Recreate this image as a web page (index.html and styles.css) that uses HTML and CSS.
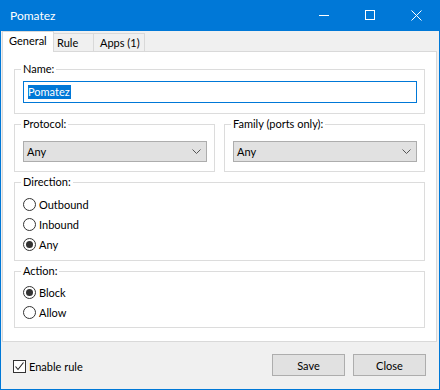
FILE: index.html
```html
<!DOCTYPE html>
<html>
<head>
<meta charset="utf-8">
<link rel="stylesheet" href="styles.css">
</head>
<body>
<div class="window">
  <div class="titlebar">
    <span class="title">Pomatez</span>
    <div class="controls">
      <div class="ctl"><svg width="10" height="10" viewBox="0 0 10 10"><path d="M0 5.5H10" stroke="#fff" stroke-width="1"/></svg></div>
      <div class="ctl"><svg width="10" height="10" viewBox="0 0 10 10"><rect x="0.5" y="0.5" width="9" height="9" fill="none" stroke="#fff" stroke-width="1"/></svg></div>
      <div class="ctl"><svg width="11" height="11" viewBox="0 0 11 11"><path d="M0.5 0.5L10.5 10.5M10.5 0.5L0.5 10.5" stroke="#fff" stroke-width="1"/></svg></div>
    </div>
  </div>
  <div class="main">
    <div class="tabs">
      <div class="tab active tab-general">General</div>
      <div class="tab tab-rule">Rule</div>
      <div class="tab tab-apps">Apps (1)</div>
    </div>
    <div class="panel">
      <fieldset class="group name-group">
        <legend>Name:</legend>
        <div class="textbox"><span class="sel">Pomatez</span></div>
      </fieldset>
      <div class="row">
        <fieldset class="group combo-group">
          <legend>Protocol:</legend>
          <div class="combo"><span>Any</span><svg width="9" height="5" viewBox="0 0 9 5"><path d="M0.5 0.5L4.5 4.5L8.5 0.5" fill="none" stroke="#555" stroke-width="1"/></svg></div>
        </fieldset>
        <fieldset class="group combo-group">
          <legend>Family (ports only):</legend>
          <div class="combo"><span>Any</span><svg width="9" height="5" viewBox="0 0 9 5"><path d="M0.5 0.5L4.5 4.5L8.5 0.5" fill="none" stroke="#555" stroke-width="1"/></svg></div>
        </fieldset>
      </div>
      <fieldset class="group radio-group dir-group">
        <legend>Direction:</legend>
        <div class="radio"><span class="circle"></span><span>Outbound</span></div>
        <div class="radio"><span class="circle"></span><span>Inbound</span></div>
        <div class="radio"><span class="circle checked"></span><span>Any</span></div>
      </fieldset>
      <fieldset class="group radio-group act-group">
        <legend>Action:</legend>
        <div class="radio"><span class="circle checked"></span><span>Block</span></div>
        <div class="radio"><span class="circle"></span><span>Allow</span></div>
      </fieldset>
    </div>
    <div class="footer">
      <div class="check">
        <span class="box"><svg width="11" height="11" viewBox="0 0 11 11"><path d="M1.5 5.5L4 8.5L9.5 1.5" fill="none" stroke="#222" stroke-width="1.1"/></svg></span>
        <span>Enable rule</span>
      </div>
      <div class="buttons">
        <div class="btn">Save</div>
        <div class="btn">Close</div>
      </div>
    </div>
  </div>
</div>
</body>
</html>
```

FILE: styles.css
```css
* { box-sizing: border-box; }
html, body { margin: 0; padding: 0; }
body {
  font-family: Lato, "Noto Sans", sans-serif;
  font-size: 11px;
  color: #000;
  background: #fff;
}
.window {
  width: 440px;
  height: 390px;
  display: flex;
  flex-direction: column;
}
.titlebar {
  height: 31px;
  background: #0078d7;
  display: flex;
  align-items: flex-start;
  justify-content: space-between;
  color: #fff;
}
.title {
  line-height: 31px;
  padding-left: 10px;
  font-size: 12px;
}
.controls {
  display: flex;
  margin-right: 1px;
}
.ctl {
  width: 46px;
  height: 30px;
  display: flex;
  align-items: center;
  justify-content: center;
}
.main {
  flex: 1;
  display: flex;
  flex-direction: column;
  background: #f0f0f0;
  border: 1px solid #0078d7;
  border-top: 0;
}
.tabs {
  height: 20px;
  display: flex;
  align-items: flex-end;
  padding-left: 1px;
}
.tab {
  height: 18px;
  line-height: 17px;
  border: 1px solid #d9d9d9;
  border-bottom: 0;
  background: #f0f0f0;
  margin-left: -1px;
  white-space: nowrap;
}
.tab-general { width: 52px; padding-left: 6px; margin-left: 0; }
.tab-rule { width: 41px; padding-left: 3px; }
.tab-apps { width: 52px; padding-left: 6px; }
.tab.active {
  position: relative;
  z-index: 1;
  height: 21px;
  margin-bottom: -1px;
  line-height: 18px;
  background: #fff;
}
.panel {
  flex: 1;
  margin: 0 2px 0 1px;
  background: #fff;
  border: 1px solid #d9d9d9;
  padding: 10px 11px 0 11px;
}
.group {
  margin: 0;
  border: 1px solid #dcdcdc;
  padding: 0 7px 10px 8px;
  min-width: 0;
}
.group legend {
  padding: 0 2px;
  margin-left: -2px;
  line-height: 14px;
}
.name-group { padding-top: 5px; }
.textbox {
  height: 22px;
  border: 1px solid #0078d7;
  background: #fff;
  padding: 3px 0 0 4px;
}
.sel {
  display: inline-block;
  background: #0078d7;
  color: #fff;
  line-height: 14px;
  padding: 0 1px 0 0;
}
.row {
  display: grid;
  grid-template-columns: 1fr 1fr;
  gap: 9px;
  margin-top: 3px;
}
.combo-group { padding-top: 10px; padding-bottom: 9px; }
.combo {
  height: 21px;
  border: 1px solid #adadad;
  background: #e1e1e1;
  display: flex;
  align-items: center;
  justify-content: space-between;
  padding: 0 5px 0 3px;
}
.combo svg { display: block; }
.radio-group { margin-top: 3px; }
.dir-group { padding-top: 5px; padding-bottom: 6px; }
.act-group { padding-top: 4px; padding-bottom: 5px; }
.radio {
  height: 20px;
  display: flex;
  align-items: center;
  gap: 3px;
}
.circle {
  width: 13px;
  height: 13px;
  border: 1px solid #333;
  border-radius: 50%;
  background: #fff;
  display: flex;
  align-items: center;
  justify-content: center;
}
.circle.checked::after {
  content: "";
  width: 7px;
  height: 7px;
  border-radius: 50%;
  background: #333;
}
.footer {
  height: 47px;
  display: flex;
  align-items: center;
  justify-content: space-between;
  padding: 0 13px 1px 12px;
}
.check {
  display: flex;
  align-items: center;
  gap: 3px;
  margin-top: 2px;
}
.box {
  width: 13px;
  height: 13px;
  border: 1px solid #333;
  background: #fff;
  display: flex;
  align-items: center;
  justify-content: center;
}
.box svg { display: block; }
.buttons {
  display: flex;
  gap: 8px;
}
.btn {
  width: 73px;
  height: 22px;
  border: 1px solid #adadad;
  background: #e1e1e1;
  display: flex;
  align-items: center;
  justify-content: center;
}
```
